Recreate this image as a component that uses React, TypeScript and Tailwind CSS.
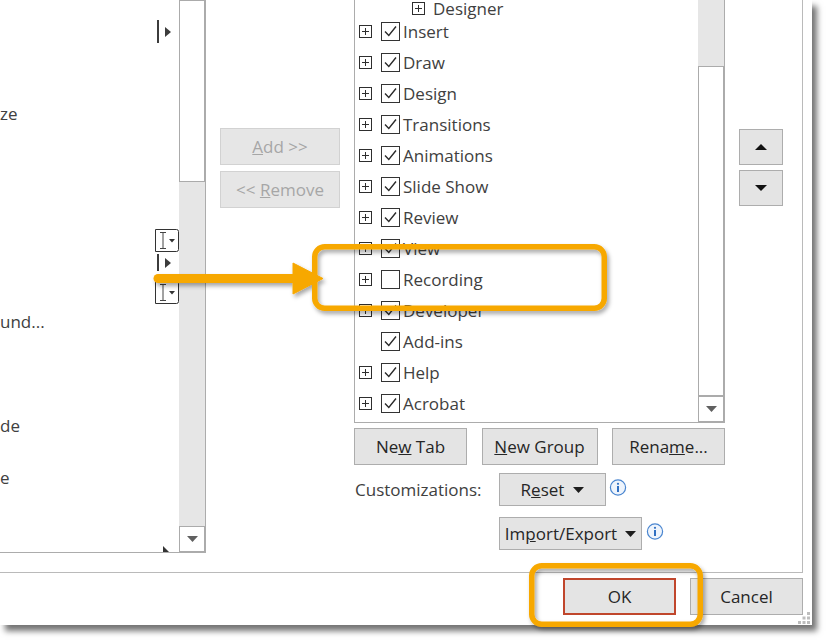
import React from 'react'

const treeItems = [
    { label: 'Insert', plus: true, checked: true },
    { label: 'Draw', plus: true, checked: true },
    { label: 'Design', plus: true, checked: true },
    { label: 'Transitions', plus: true, checked: true },
    { label: 'Animations', plus: true, checked: true },
    { label: 'Slide Show', plus: true, checked: true },
    { label: 'Review', plus: true, checked: true },
    { label: 'View', plus: true, checked: true },
    { label: 'Recording', plus: true, checked: false },
    { label: 'Developer', plus: true, checked: true },
    { label: 'Add-ins', plus: false, checked: true },
    { label: 'Help', plus: true, checked: true },
    { label: 'Acrobat', plus: true, checked: true },
]

// left list: text fragment or icon per row (first row is 22px, rest 26px)
const leftRows: { text?: string; icon?: 'bar' | 'box'; barH?: number }[] = [
    {}, { icon: 'bar', barH: 23 }, {}, {}, { text: 'ze' }, {}, {}, {}, {},
    { icon: 'box' }, { icon: 'bar', barH: 17 }, { icon: 'box' }, { text: 'und...' },
    {}, {}, {}, { text: 'de' }, {}, { text: 'e' }, {}, {},
]

function PlusBox() {
    return (
        <svg width="13" height="13" viewBox="0 0 13 13" className="shrink-0">
            <rect x="0.5" y="0.5" width="12" height="12" fill="white" stroke="#2e2e2e" />
            <path d="M3 6.5H10M6.5 3V10" stroke="#2e2e2e" />
        </svg>
    )
}

function CheckBox({ checked }: { checked: boolean }) {
    return (
        <svg width="19" height="19" viewBox="0 0 19 19" className="shrink-0">
            <rect x="0.5" y="0.5" width="18" height="18" fill="white" stroke="#333" />
            {checked && <path d="M4 9.5L7.8 13.5L15 4.5" fill="none" stroke="#2a2a2a" strokeWidth="1.4" />}
        </svg>
    )
}

function DownTri({ color = '#606060' }: { color?: string }) {
    return (
        <svg width="11" height="6" viewBox="0 0 11 6">
            <path d="M0 0H11L5.5 6Z" fill={color} />
        </svg>
    )
}

function InfoIcon() {
    return (
        <svg width="18" height="17" viewBox="0 0 18 17" className="shrink-0">
            <circle cx="9" cy="8.5" r="7.6" fill="#eef4fc" stroke="#4a86d0" strokeWidth="1.2" />
            <circle cx="9" cy="4.8" r="1.1" fill="#2f6fc2" />
            <rect x="8" y="7" width="2" height="6" fill="#2f6fc2" />
        </svg>
    )
}

function Scrollbar({ thumbH }: { thumbH: number }) {
    return (
        <div className="w-[26px] h-full flex flex-col">
            {thumbH > 0 ? (
                <div className="bg-white border border-[#ababab]" style={{ height: thumbH }}></div>
            ) : null}
            <div className="flex-1 bg-[#e6e6e6]"></div>
            <div className="h-[26px] bg-white border border-[#ababab] flex items-center justify-center">
                <DownTri />
            </div>
        </div>
    )
}

function Btn({ children, className = '', disabled = false }: { children: React.ReactNode; className?: string; disabled?: boolean }) {
    return (
        <div
            className={
                'flex items-center justify-center text-[17px] ' +
                (disabled
                    ? 'bg-[#e6e6e6] border border-[#d2d2d2] text-[#a6a6a6] '
                    : 'bg-[#e4e4e4] border border-[#adadad] text-[#262626] ') +
                className
            }
        >
            {children}
        </div>
    )
}

export default function App() {
    return (
        <div className="relative w-[827px] h-[642px] bg-white overflow-hidden font-['Open_Sans',sans-serif]">
            <div className="w-[812px] h-[625px] bg-white shadow-[5px_6px_6px_rgba(0,0,0,0.55)] relative">
                {/* content area */}
                <div className="w-[803px] h-[573px] border-r border-b border-[#bababa] flex items-start">
                    {/* left list */}
                    <div className="w-[206px] h-[553px] border-r border-b border-[#acacac] flex">
                        <div className="w-[179px] h-full relative overflow-hidden text-[17px] text-[#404040]">
                            {leftRows.map((r, i) => (
                                <div key={i} className={(i === 0 ? 'h-[22px]' : 'h-[26px]') + ' flex items-center justify-between'}>
                                    <span className="leading-none">{r.text ?? ''}</span>
                                    {r.icon === 'bar' && (
                                        <div className="self-start mt-[-2px] w-[24px] flex items-center" style={{ height: r.barH }}>
                                            <div className="ml-[2px] w-[2px] h-full bg-[#3c3c3c]"></div>
                                            <svg width="6" height="10" viewBox="0 0 6 10" className="ml-[6px]">
                                                <path d="M0 0L6 5L0 10Z" fill="#3c3c3c" />
                                            </svg>
                                        </div>
                                    )}
                                    {r.icon === 'box' && (
                                        <svg width="24" height="23" viewBox="0 0 24 23" className="self-start mt-[-1px]">
                                            <path d="M0.5 0.5H21.5Q23.5 0.5 23.5 2.5V20.5Q23.5 22.5 21.5 22.5H0.5Z" fill="white" stroke="#333" />
                                            <path d="M5 3.5H11M8 3.5V19.5M5 19.5H11" stroke="#444" />
                                            <path d="M14 10H20L17 13.5Z" fill="#333" />
                                        </svg>
                                    )}
                                </div>
                            ))}
                            <svg width="6" height="6" viewBox="0 0 6 6" className="absolute right-[10px] bottom-0">
                                <path d="M0 0V6H6Z" fill="#333" />
                            </svg>
                        </div>
                        <Scrollbar thumbH={182} />
                    </div>

                    {/* add / remove */}
                    <div className="ml-[14px] mt-[128px] w-[120px] flex flex-col gap-[6px]">
                        <Btn disabled className="h-[37px]"><span><u>A</u>dd &gt;&gt;</span></Btn>
                        <Btn disabled className="h-[37px]"><span>&lt;&lt; <u>R</u>emove</span></Btn>
                    </div>

                    {/* tree column */}
                    <div className="ml-[14px] w-[371px] flex flex-col">
                        <div className="h-[423px] border-l border-r border-b border-[#acacac] flex">
                            <div className="flex-1 overflow-hidden text-[17px] text-[#404040]">
                                <div className="h-[16px] flex items-center pl-[57px]">
                                    <PlusBox />
                                    <span className="ml-[8px] leading-[16px] pt-[1px]">Designer</span>
                                </div>
                                {treeItems.map((it) => (
                                    <div key={it.label} className="h-[31px] flex items-center pl-[4px]">
                                        {it.plus ? <PlusBox /> : <span className="w-[13px]"></span>}
                                        <span className="ml-[9px] flex"><CheckBox checked={it.checked} /></span>
                                        <span className="ml-[3px]">{it.label}</span>
                                    </div>
                                ))}
                            </div>
                            <div className="w-[26px] h-full flex flex-col">
                                <div className="h-[66px] bg-[#e6e6e6]"></div>
                                <div className="flex-1 bg-white border border-[#ababab]"></div>
                                <div className="h-[26px] bg-white border border-[#ababab] flex items-center justify-center">
                                    <DownTri />
                                </div>
                            </div>
                        </div>

                        <div className="mt-[5px] flex justify-between">
                            <Btn className="w-[113px] h-[37px]"><span>Ne<u>w</u> Tab</span></Btn>
                            <Btn className="w-[116px] h-[37px]"><span><u>N</u>ew Group</span></Btn>
                            <Btn className="w-[113px] h-[37px]"><span>Rena<u>m</u>e...</span></Btn>
                        </div>

                        <div className="mt-[8px] grid grid-cols-[145px_1fr] gap-y-[11px] items-start">
                            <div className="h-[33px] flex items-center pl-[1px] text-[17px] text-[#404040]">Customizations:</div>
                            <div className="flex items-start">
                                <Btn className="w-[107px] h-[33px] gap-[9px]">
                                    <span>R<u>e</u>set</span>
                                    <DownTri color="#1e1e1e" />
                                </Btn>
                                <div className="ml-[3px] mt-[6px]"><InfoIcon /></div>
                            </div>
                            <div></div>
                            <div className="flex items-start">
                                <Btn className="w-[143px] h-[33px] gap-[8px]">
                                    <span>Im<u>p</u>ort/Export</span>
                                    <DownTri color="#1e1e1e" />
                                </Btn>
                                <div className="ml-[4px] mt-[6px]"><InfoIcon /></div>
                            </div>
                        </div>
                    </div>

                    {/* up / down */}
                    <div className="ml-[14px] mt-[129px] w-[44px] flex flex-col gap-[5px]">
                        <div className="h-[36px] bg-[#e4e4e4] border border-[#adadad] flex items-center justify-center">
                            <svg width="12" height="6" viewBox="0 0 12 6"><path d="M0 6H12L6 0Z" fill="#111" /></svg>
                        </div>
                        <div className="h-[36px] bg-[#e4e4e4] border border-[#adadad] flex items-center justify-center">
                            <svg width="12" height="6" viewBox="0 0 12 6"><path d="M0 0H12L6 6Z" fill="#111" /></svg>
                        </div>
                    </div>
                </div>

                {/* footer */}
                <div className="flex justify-end gap-[14px] pt-[5px] pr-[9px]">
                    <Btn className="w-[113px] h-[37px] border-2 border-[#c0462c]">OK</Btn>
                    <Btn className="w-[113px] h-[37px]">Cancel</Btn>
                </div>
                <svg width="12" height="12" viewBox="0 0 12 12" className="absolute right-[2px] bottom-[1px]">
                    <rect x="9" y="0" width="3" height="3" fill="#bdbdbd" />
                    <rect x="4.5" y="4.5" width="3" height="3" fill="#bdbdbd" />
                    <rect x="9" y="4.5" width="3" height="3" fill="#bdbdbd" />
                    <rect x="0" y="9" width="3" height="3" fill="#bdbdbd" />
                    <rect x="4.5" y="9" width="3" height="3" fill="#bdbdbd" />
                    <rect x="9" y="9" width="3" height="3" fill="#bdbdbd" />
                </svg>
            </div>

            {/* orange annotations */}
            <svg className="absolute left-0 top-0 pointer-events-none" width="827" height="642" viewBox="0 0 827 642">
                <defs>
                    <filter id="sh" x="-10%" y="-10%" width="130%" height="140%">
                        <feDropShadow dx="2" dy="3" stdDeviation="2" floodColor="#000" floodOpacity="0.35" />
                    </filter>
                </defs>
                <g filter="url(#sh)">
                    <path d="M158 278.5H296" stroke="#f7a800" strokeWidth="9" strokeLinecap="round" />
                    <path d="M293 263L323 278.5L293 294Z" fill="#f7a800" stroke="#f7a800" strokeWidth="1" strokeLinejoin="round" />
                    <rect x="314.75" y="246.75" width="289.5" height="61.5" rx="10" fill="none" stroke="#f7a800" strokeWidth="5.5" />
                    <rect x="531.75" y="565.75" width="168.5" height="58.5" rx="10" fill="none" stroke="#f7a800" strokeWidth="5.5" />
                </g>
            </svg>
        </div>
    )
}
